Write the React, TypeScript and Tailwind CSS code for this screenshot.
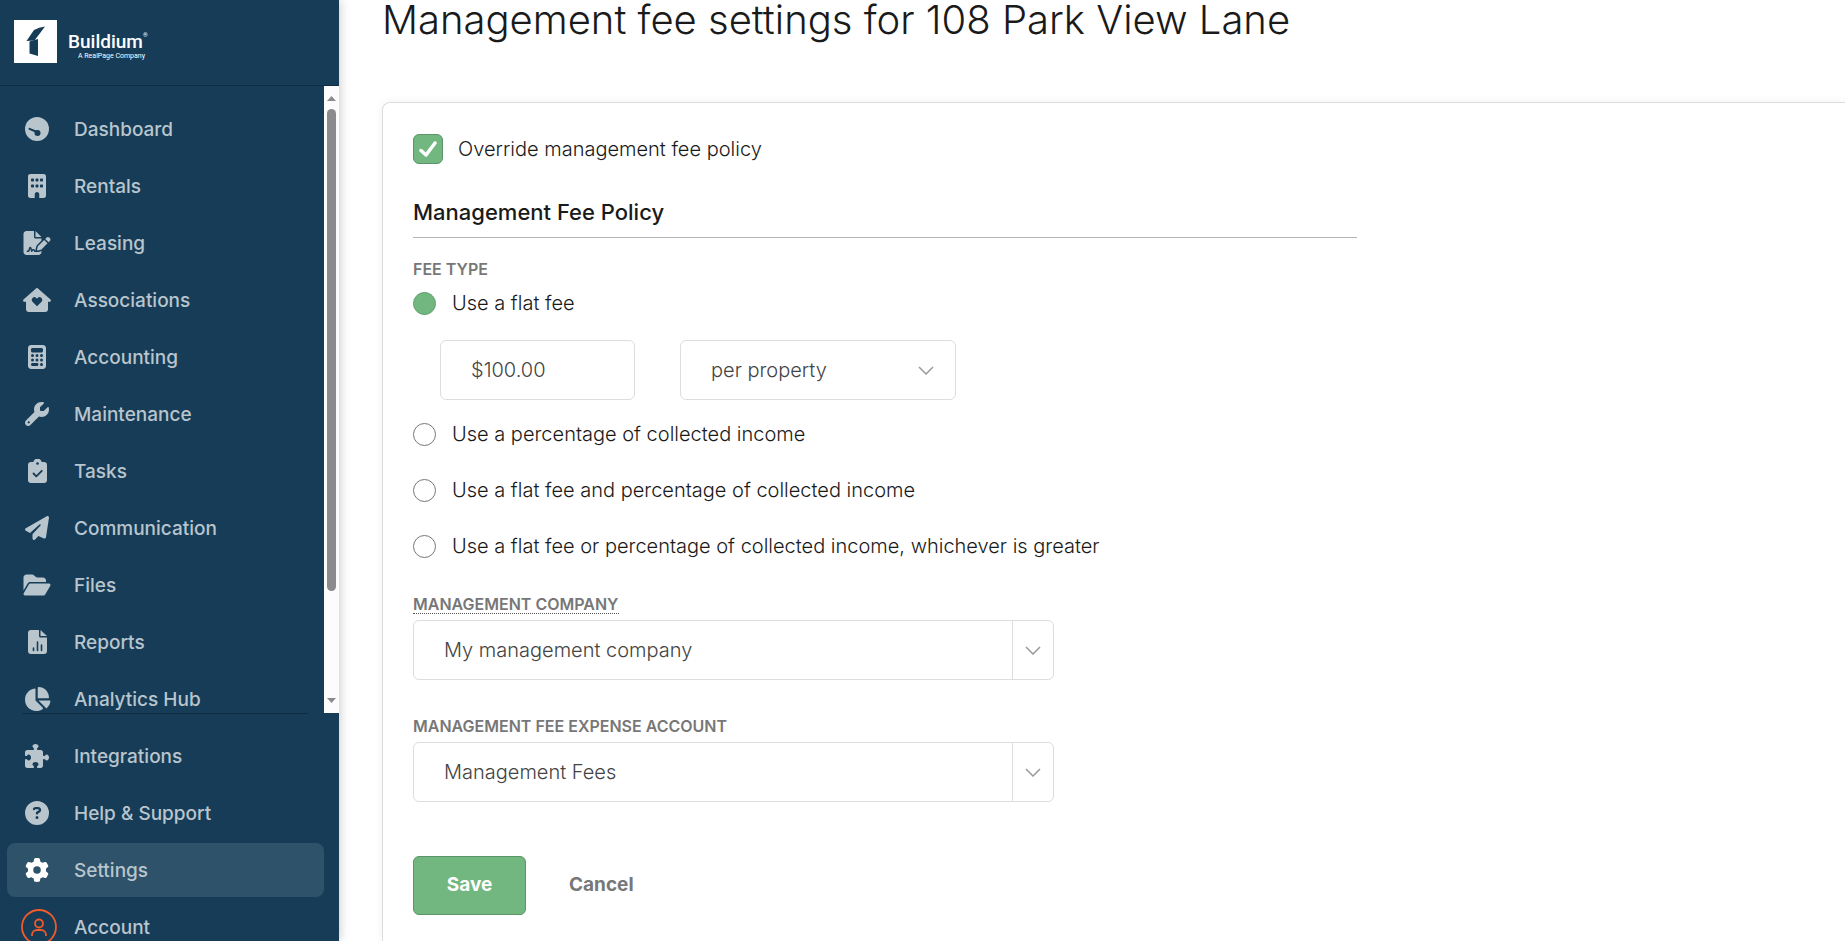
import { useState } from "react";
import type { ReactNode } from "react";
import {
  FaBuilding,
  FaCalculator,
  FaChartPie,
  FaCircleQuestion,
  FaFileSignature,
  FaFolderOpen,
  FaGear,
  FaPaperPlane,
  FaPuzzlePiece,
  FaWrench,
} from "react-icons/fa6";

function DashboardIcon() {
  return (
    <svg viewBox="0 0 24 24" className="size-6">
      <circle cx="12" cy="12" r="12" fill="currentColor" />
      <path d="M4.500 11.800 12 15" stroke="#163c57" strokeWidth="2" strokeLinecap="round" />
      <circle cx="12.500" cy="16" r="3" fill="#163c57" />
    </svg>
  );
}

function HouseHeartIcon() {
  return (
    <svg viewBox="0 0 28 24" className="h-6 w-7" fill="currentColor">
      <path
        fillRule="evenodd"
        d="M13 .4a1.500 1.500 0 0 1 2 0l12.500 11a1.400 1.400 0 0 1-1 2.400H25v7.200a3 3 0 0 1-3 3H6a3 3 0 0 1-3-3v-7.200H1.500a1.400 1.400 0 0 1-1-2.400ZM14 18.200l4.300-4.300a2.800 2.800 0 0 0 .1-3.900 2.600 2.600 0 0 0-3.700 0l-.7.700-.7-.7a2.600 2.600 0 0 0-3.700 0 2.800 2.800 0 0 0 .1 3.900Z"
      />
    </svg>
  );
}

function ClipboardIcon() {
  return (
    <svg viewBox="0 0 19 24" className="h-6 w-[19px]">
      <path
        fill="currentColor"
        d="M3 3h2.300a4.300 4.300 0 0 1 8.400 0H16a3 3 0 0 1 3 3v15a3 3 0 0 1-3 3H3a3 3 0 0 1-3-3V6a3 3 0 0 1 3-3Z"
      />
      <circle cx="9.500" cy="4.500" r="1.300" fill="#163c57" />
      <path
        d="m5.500 14.500 2.800 2.800 5.500-5.500"
        fill="none"
        stroke="#163c57"
        strokeWidth="1.800"
        strokeLinecap="round"
        strokeLinejoin="round"
      />
    </svg>
  );
}

function FileChartIcon() {
  return (
    <svg viewBox="0 0 19 24" className="h-6 w-[19px]">
      <path
        fill="currentColor"
        d="M3 0h8v6a1.500 1.500 0 0 0 1.500 1.500H19V21a3 3 0 0 1-3 3H3a3 3 0 0 1-3-3V3a3 3 0 0 1 3-3Zm9.500 0L19 6h-6.500Z"
      />
      <path d="M5.500 18v2.500M9.500 12v8.500M13.500 15v5.500" stroke="#163c57" strokeWidth="1.600" strokeLinecap="round" />
    </svg>
  );
}

function AccountIcon() {
  return (
    <svg viewBox="0 0 36 36" className="ml-1 size-9" fill="none" stroke="#f15a29" strokeWidth="1.800">
      <circle cx="18" cy="18" r="17" />
      <circle cx="18" cy="14.500" r="4" />
      <path d="M11 27v-1a5 5 0 0 1 5-5h4a5 5 0 0 1 5 5v1" />
    </svg>
  );
}

function BuildiumMark() {
  return (
    <svg viewBox="0 0 43 43" className="size-[43px]">
      <path fill="#fff" d="M0 0h43v43H0z" />
      <path fill="#163c57" d="M12.500 21 20 10q5-3 11-3.500L20.500 20.500Z" />
      <path fill="#163c57" d="M15.500 21.500 24 19v17l-8.500-2.500Z" />
    </svg>
  );
}

type Item = { label: string; icon: ReactNode };

const mainItems: Item[] = [
  { label: "Dashboard", icon: <DashboardIcon /> },
  { label: "Rentals", icon: <FaBuilding /> },
  { label: "Leasing", icon: <FaFileSignature className="h-6 w-7" /> },
  { label: "Associations", icon: <HouseHeartIcon /> },
  { label: "Accounting", icon: <FaCalculator /> },
  { label: "Maintenance", icon: <FaWrench /> },
  { label: "Tasks", icon: <ClipboardIcon /> },
  { label: "Communication", icon: <FaPaperPlane /> },
  { label: "Files", icon: <FaFolderOpen className="h-6 w-7" /> },
  { label: "Reports", icon: <FileChartIcon /> },
  { label: "Analytics Hub", icon: <FaChartPie className="h-6 w-7" /> },
];

const footerItems: Item[] = [
  { label: "Integrations", icon: <FaPuzzlePiece /> },
  { label: "Help & Support", icon: <FaCircleQuestion /> },
  { label: "Settings", icon: <FaGear /> },
  { label: "Account", icon: <AccountIcon /> },
];

function NavItem({ label, icon, active }: Item & { active?: boolean }) {
  return (
    <a
      href="#"
      className={`flex h-[54px] shrink-0 items-center rounded-lg text-[19px] font-medium ${
        active ? "bg-[#2e5269]" : ""
      }`}
    >
      <span
        className={`flex w-[60px] shrink-0 items-center justify-center text-2xl ${
          active ? "text-white" : ""
        }`}
      >
        {icon}
      </span>
      <span className="pt-0.5 pl-[7px]">{label}</span>
    </a>
  );
}

function Scrollbar() {
  return (
    <div className="flex w-[15px] shrink-0 flex-col items-center bg-[#fcfcfc] text-[#8b8b8b]">
      <svg viewBox="0 0 15 23" className="h-[23px] w-[15px]" fill="currentColor">
        <path d="M3 15 7.500 10l4.500 5Z" />
      </svg>
      <div className="h-[482px] w-[9px] rounded-full bg-[#8b8b8b]" />
      <svg viewBox="0 0 15 23" className="mt-auto h-[23px] w-[15px]" fill="currentColor">
        <path d="M3 8h9l-4.500 5Z" />
      </svg>
    </div>
  );
}

function Sidebar() {
  return (
    <aside className="flex w-[339px] shrink-0 flex-col overflow-hidden bg-[#163c57] text-[#b9c5cd] shadow-[0_0_10px_rgba(0,0,0,0.25)]">
      <div className="flex h-[86px] shrink-0 border-b border-[#0f2c42] pl-3.5 pt-5 text-white">
        <BuildiumMark />
        <div className="ml-[11px] flex flex-col pt-3">
          <span className="flex font-['Roboto',sans-serif] text-[19px] leading-5 font-medium">
            Buildium<sup className="text-[6px] leading-3">®</sup>
          </span>
          <span className="pl-2.5 font-['Roboto',sans-serif] text-[7px] leading-2">A RealPage Company</span>
        </div>
      </div>
      <nav className="flex h-[627px] shrink-0">
        <div className="flex flex-1 flex-col gap-[3px] overflow-hidden pl-[7px] pt-4">
          {mainItems.map((item) => (
            <NavItem key={item.label} {...item} />
          ))}
        </div>
        <Scrollbar />
      </nav>
      <nav className="flex flex-col pl-[7px] pr-[15px]">
        <div className="mr-4 ml-[15px] h-px bg-[#0f2c42]" />
        <div className="flex flex-col gap-[3px] pt-[15px]">
          {footerItems.map((item) => (
            <NavItem key={item.label} {...item} active={item.label === "Settings"} />
          ))}
        </div>
      </nav>
    </aside>
  );
}

function Chevron() {
  return (
    <svg viewBox="0 0 16 9" className="h-[9px] w-4" fill="none" stroke="#999" strokeWidth="1.500">
      <path d="m1 1 7 7 7-7" />
    </svg>
  );
}

const feeTypes = [
  { id: "flat", label: "Use a flat fee" },
  { id: "percent", label: "Use a percentage of collected income" },
  { id: "both", label: "Use a flat fee and percentage of collected income" },
  { id: "greater", label: "Use a flat fee or percentage of collected income, whichever is greater" },
];

function ComboField({ id, label, value, hint }: { id: string; label: string; value: string; hint?: boolean }) {
  return (
    <div className="flex flex-col items-start">
      <label
        htmlFor={id}
        className={`mb-1.5 border-b text-base leading-[18px] font-semibold text-[#777] ${
          hint ? "border-dotted border-[#555]" : "border-transparent"
        }`}
      >
        {label}
      </label>
      <div className="grid h-[60px] w-full max-w-[641px] grid-cols-1 items-center rounded-md border border-[#ddd]">
        <select
          id={id}
          className="col-start-1 row-start-1 h-full w-full appearance-none bg-transparent pr-12 pl-[30px] text-[#444] outline-none"
        >
          <option>{value}</option>
        </select>
        <span className="pointer-events-none col-start-1 row-start-1 flex h-full w-[41px] items-center justify-center justify-self-end border-l border-[#ddd]">
          <Chevron />
        </span>
      </div>
    </div>
  );
}

export default function App() {
  const [override, setOverride] = useState(true);
  const [feeType, setFeeType] = useState("flat");

  return (
    <div className="flex h-screen overflow-hidden bg-white font-['Inter',sans-serif] text-[#1a1a1a]">
      <Sidebar />
      <main className="flex min-w-0 flex-1 flex-col pl-[43px]">
        <h1 className="h-[102px] shrink-0 text-[40px] leading-10 font-light whitespace-nowrap">
          Management fee settings for 108 Park View Lane
        </h1>
        <form className="flex flex-1 flex-col rounded-tl-lg border-t border-l border-[#ddd] pt-[31px] pl-[30px] text-xl font-light shadow-[0_0_8px_rgba(0,0,0,0.06)]">
          <label className="flex items-center gap-[15px]">
            <span className="grid size-[30px] place-items-center">
              <input
                type="checkbox"
                checked={override}
                onChange={(e) => setOverride(e.target.checked)}
                className="peer col-start-1 row-start-1 size-[30px] appearance-none rounded-md border border-[#5b9468] checked:bg-[#72b680]"
              />
              <svg
                viewBox="0 0 18 16"
                className="pointer-events-none col-start-1 row-start-1 hidden h-4 w-[18px] peer-checked:block"
                fill="none"
                stroke="#fff"
                strokeWidth="3.500"
                strokeLinecap="round"
                strokeLinejoin="round"
              >
                <path d="m2 9.500 5 4.500L16 2" />
              </svg>
            </span>
            Override management fee policy
          </label>

          <h2 className="mt-8 h-[42px] w-full max-w-[944px] border-b border-[#b5b5b5] text-[22px] leading-8 font-medium">
            Management Fee Policy
          </h2>

          <fieldset className="mt-[22px]">
            <legend className="text-base leading-[18px] font-semibold text-[#777]">FEE TYPE</legend>
            <div className="mt-2.5 flex flex-col">
              {feeTypes.map((type) => (
                <div key={type.id} className="mb-[26px] last:mb-0">
                  <label className="flex h-[30px] items-center gap-4">
                    <input
                      type="radio"
                      name="fee-type"
                      checked={feeType === type.id}
                      onChange={() => setFeeType(type.id)}
                      className="size-[23px] appearance-none rounded-full border border-[#777] checked:border-[#5f9f6d] checked:bg-[#72b680]"
                    />
                    {type.label}
                  </label>
                  {type.id === "flat" && (
                    <div className="mt-[22px] -mb-[7px] ml-[27px] flex gap-[45px]">
                      <input
                        aria-label="Flat fee amount"
                        defaultValue="$100.00"
                        className="h-[60px] w-[195px] rounded-md border border-[#ddd] px-[30px] text-[#444] outline-none"
                      />
                      <div className="grid w-[276px] grid-cols-1 items-center">
                        <select
                          aria-label="Flat fee period"
                          className="col-start-1 row-start-1 h-[60px] w-full appearance-none rounded-md border border-[#ddd] bg-white px-[30px] text-[#444] outline-none"
                        >
                          <option>per property</option>
                        </select>
                        <span className="pointer-events-none col-start-1 row-start-1 mr-[22px] justify-self-end">
                          <Chevron />
                        </span>
                      </div>
                    </div>
                  )}
                </div>
              ))}
            </div>
          </fieldset>

          <div className="mt-[34px] flex flex-col gap-[37px]">
            <ComboField id="company" label="MANAGEMENT COMPANY" value="My management company" hint />
            <ComboField id="account" label="MANAGEMENT FEE EXPENSE ACCOUNT" value="Management Fees" />
          </div>

          <div className="mt-[54px] flex gap-[43px] text-[19px] font-bold">
            <button type="button" className="h-[59px] w-[113px] rounded-md border border-[#5b9468] bg-[#72b680] text-white">
              Save
            </button>
            <button type="button" className="text-[#777]">
              Cancel
            </button>
          </div>
        </form>
      </main>
    </div>
  );
}
